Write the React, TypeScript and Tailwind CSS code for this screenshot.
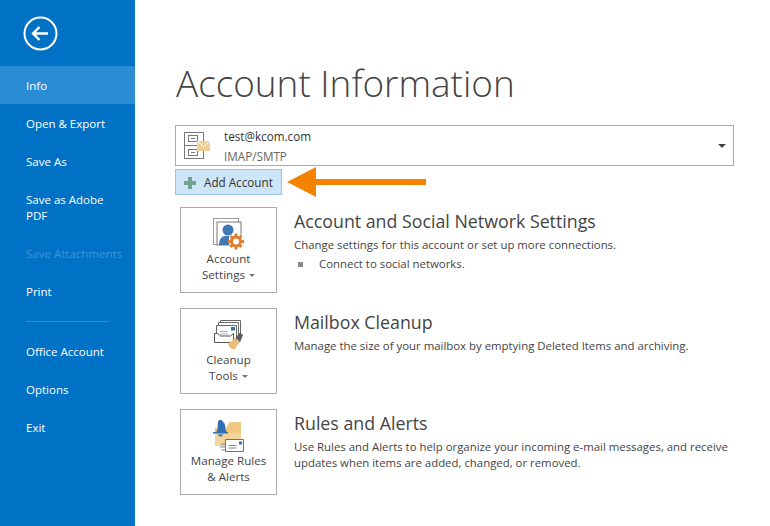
const font = "[font-family:'Open_Sans','Noto_Sans',sans-serif]";

const navItems = [
  { label: 'Info', active: true },
  { label: 'Open & Export' },
  { label: 'Save As' },
  { label: 'Save as Adobe PDF', tall: true },
  { label: 'Save Attachments', disabled: true },
  { label: 'Print' },
];
const navBottom = ['Office Account', 'Options', 'Exit'];

function AccountIcon() {
  return (
    <svg width="32" height="32" viewBox="0 0 32 32">
      <rect x="0.5" y="0.5" width="25" height="26" fill="#fff" stroke="#9a9a9a" />
      <rect x="4" y="4" width="24" height="23" fill="#fff" stroke="#777" />
      <circle cx="15" cy="12" r="5.500" fill="#3f78b5" />
      <path d="M6 27c0-6 3-9 6-9h4v9z" fill="#3f78b5" />
      <g transform="translate(23 23.500)">
        <circle r="7" fill="#fff" />
        <circle r="4.500" fill="none" stroke="#e07f2e" strokeWidth="3" />
        <path
          d="M-1.500-8h3v3h-3zM-1.500 5h3v3h-3zM-8-1.500h3v3h-3zM5-1.500h3v3h-3zM-6.500-4.500l2-2 2 2-2 2zM4.500 2.500l2 2-2 2-2-2zM4.500-6.500l2 2-2 2-2-2zM-4.500 6.500l-2-2 2-2 2 2z"
          fill="#e07f2e"
        />
      </g>
    </svg>
  );
}

function CleanupIcon() {
  return (
    <svg width="32" height="32" viewBox="0 0 32 32">
      <path d="M7.500 1.500h20v14h-20z" fill="#fff" stroke="#666" />
      <path d="M5.500 3.500h20v14h-20z" fill="#fff" stroke="#666" />
      <path d="M3.500 6.500h20v14h-20z" fill="#fff" stroke="#666" />
      <rect x="18" y="8" width="4" height="3.500" fill="#2f75b5" />
      <path d="M7 12.500h8M7 15h8" stroke="#aaa" />
      <path d="M1.500 14.500l3 0 3 2.500h10l3-2.500v9h-19z" fill="#fff" stroke="#555" />
      <path d="M15 25l7-6 4.500 4.500-5 7c-2.500.5-5-1.500-6.500-5.500z" fill="#e8bd7c" />
      <path d="M22.500 18.500l4.500-5 3 2.500-3 7.500z" fill="#5f5f5f" />
    </svg>
  );
}

function RulesIcon() {
  return (
    <svg width="32" height="36" viewBox="0 0 32 36">
      <path d="M2 10h11l4-6h11v23h-26z" fill="#efc780" />
      <path d="M2 28V15h26v13z" fill="#f4d59c" />
      <path d="M5 4c1-3 4-3 5 0 2 1 2.500 4 2.500 8l1.500 2h-11l1.500-2c0-4 .500-7 .500-8z" fill="#2f6fb5" />
      <path d="M0 14h15v1.500h-15z" fill="#2f6fb5" />
      <path d="M4.500 16.500h6l-3 2.500z" fill="#2f6fb5" />
      <path d="M12.500 21.500h18v12h-18z" fill="#fff" stroke="#4a7ba8" />
      <rect x="26" y="23.500" width="3" height="3" fill="#2f75b5" />
      <path d="M15.500 27.500h8M15.500 30h8" stroke="#888" />
      <path d="M8 26h4M7 29h5M8 32h4" stroke="#888" />
    </svg>
  );
}

function Caret() {
  return <span className="ml-1 inline-block border-x-[3px] border-t-[3px] border-x-transparent border-t-[#777] align-middle" />;
}

function ActionRow({ icon, lines, caret, title, children }: { icon: React.ReactNode; lines: string[]; caret?: boolean; title: string; children: React.ReactNode }) {
  return (
    <div className="flex h-[86px]">
      <div className="ml-[5px] flex w-[97px] flex-col items-center border border-[#ababab] pt-[10px] text-center text-[11.6px] leading-[16px] text-[#444]">
        <div className="flex h-[32px] items-center">{icon}</div>
        <div className="mt-[1px]">{lines[0]}</div>
        <div>
          {lines[1]}
          {caret && <Caret />}
        </div>
      </div>
      <div className="ml-[17px] pt-[1px]">
        <h2 className="text-[17.8px] leading-[26px] text-[#444]">{title}</h2>
        <div className="mt-[3px] text-[11.4px] leading-[16px] text-[#444]">{children}</div>
      </div>
    </div>
  );
}

export default function App() {
  return (
    <div className={`flex h-[526px] w-[770px] overflow-hidden bg-white ${font}`}>
      <aside className="w-[135px] shrink-0 bg-[#0072c6] text-[11.5px] text-white">
        <div className="flex h-[66px] items-start pl-[23px] pt-[16px]">
          <svg width="35" height="35" viewBox="0 0 35 35" fill="none" stroke="#fff">
            <circle cx="17.500" cy="17.500" r="16" strokeWidth="2" />
            <path d="M10 17.500h15M16.500 11l-6.500 6.500 6.500 6.500" strokeWidth="2.400" />
          </svg>
        </div>
        {navItems.map((item) => (
          <div
            key={item.label}
            className={`flex items-center pl-[26px] pr-[10px] pt-[1px] leading-[16px] ${item.tall ? 'h-[54px]' : 'h-[38px]'} ${item.active ? 'bg-[#2a8dd4]' : ''} ${item.disabled ? 'text-[#3a97dc]' : ''}`}
          >
            {item.label}
          </div>
        ))}
        <div className="mx-[26px] mb-[11px] mt-[11px] h-px w-[83px] bg-[#2a8dd4]" />
        {navBottom.map((label) => (
          <div key={label} className="flex h-[38px] items-center pl-[26px]">
            {label}
          </div>
        ))}
      </aside>

      <main className="relative flex-1 pl-[40px] pr-[38px]">
        <h1 className="ml-[1px] mt-[58px] h-[51px] text-[36.9px] font-light leading-[50px] text-[#444]">Account Information</h1>

        <div className="mt-[16px] flex h-[41px] items-center border border-[#ababab] pl-[8px] pr-[7px]">
          <svg width="27" height="27" viewBox="0 0 27 27" fill="none">
            <rect x="0.500" y="0.500" width="19" height="26" fill="#fff" stroke="#777" />
            <path d="M.5 13.500h19" stroke="#777" />
            <rect x="4.500" y="3.500" width="9" height="6" stroke="#777" />
            <rect x="4.500" y="17.500" width="9" height="6" stroke="#777" />
            <path d="M7 6.500h4M7 20.500h4" stroke="#777" />
            <rect x="13" y="9" width="13" height="10" fill="#f0cf94" />
            <path d="M13 9l6.500 5.500 6.500-5.500" stroke="#fff" />
          </svg>
          <div className="ml-[13px] flex-1 text-[11.7px] leading-[20px]">
            <div className="text-[#333]">test@kcom.com</div>
            <div className="text-[#666]">IMAP/SMTP</div>
          </div>
          <span className="border-x-[4px] border-t-[4px] border-x-transparent border-t-[#444]" />
        </div>

        <button className="mt-[3px] flex h-[26px] w-[107px] items-center border border-[#9cc4e2] bg-[#cde6f7] pl-[8px] pt-[1px] text-[11.7px] text-[#333]">
          <svg width="12" height="12" viewBox="0 0 12 12">
            <path d="M4 0h4v4h4v4h-4v4h-4v-4h-4v-4h4z" fill="#6fa58f" />
          </svg>
          <span className="ml-[8px]">Add Account</span>
        </button>

        <div className="mt-[12px] flex flex-col gap-[15px]">
          <ActionRow icon={<AccountIcon />} lines={['Account', 'Settings']} caret title="Account and Social Network Settings">
            <p>Change settings for this account or set up more connections.</p>
            <p className="mt-[3px] flex items-center">
              <span className="ml-[4px] mr-[16px] h-[5px] w-[5px] bg-[#8a8a8a]" />
              Connect to social networks.
            </p>
          </ActionRow>
          <ActionRow icon={<CleanupIcon />} lines={['Cleanup', 'Tools']} caret title="Mailbox Cleanup">
            <p>Manage the size of your mailbox by emptying Deleted Items and archiving.</p>
          </ActionRow>
          <ActionRow icon={<RulesIcon />} lines={['Manage Rules', '& Alerts']} title="Rules and Alerts">
            <p className="w-[440px]">Use Rules and Alerts to help organize your incoming e-mail messages, and receive updates when items are added, changed, or removed.</p>
          </ActionRow>
        </div>

        {/* orange annotation arrow */}
        <svg className="absolute left-[151px] top-[166px]" width="141" height="32" viewBox="0 0 141 32">
          <path d="M1 16L30 1v12h110v6H30v12z" fill="#f58300" />
        </svg>
      </main>
    </div>
  );
}
